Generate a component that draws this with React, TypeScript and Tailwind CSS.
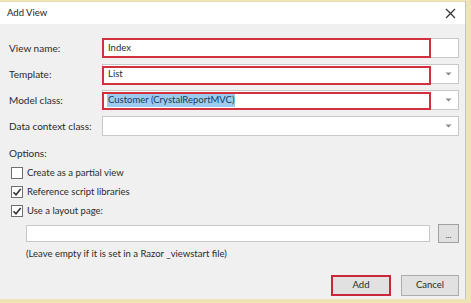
import React from "react";

const Chevron = () => (
  <svg width="7" height="4" viewBox="0 0 7 4" className="absolute right-[6px] top-1/2 -translate-y-1/2">
    <path d="M0.5 0.5 L3.5 3.5 L6.5 0.5 Z" fill="#8a8a8a" />
  </svg>
);

const Check = ({ checked }: { checked: boolean }) => (
  <div className="w-[12px] h-[12px] border border-[#6f6f6f] bg-white flex items-center justify-center shrink-0">
    {checked && (
      <svg width="10" height="10" viewBox="0 0 10 10">
        <path d="M1.5 5.2 L4 7.8 L8.7 2" fill="none" stroke="#333" strokeWidth="1.6" />
      </svg>
    )}
  </div>
);

export default function App() {
  const font = { fontFamily: 'Lato, "Noto Sans", sans-serif' };
  return (
    <div className="w-[471px] h-[303px] bg-[#efe3b8] overflow-hidden" style={font}>
      <div className="w-[466px] h-[298px] mt-[1px] bg-[#f0f0f0] border-r border-[#c4c4c4] flex flex-col">
        <div className="h-[23px] bg-white flex items-center justify-between pl-[7px] pr-[9px] border-t border-[#e8dca8]">
          <span className="text-[9.5px] text-[#222]">Add View</span>
          <svg width="11" height="11" viewBox="0 0 11 11">
            <path d="M1 1 L10 10 M10 1 L1 10" stroke="#333" strokeWidth="1.2" />
          </svg>
        </div>
        <div className="flex flex-col pl-[9px] pt-[14px] text-[10px] text-[#2a2a2a] w-[459px]">
          <div className="flex flex-col gap-[6px]">
            <div className="flex items-center h-[20px]">
              <span className="w-[93px]">View name:</span>
              <div className="relative w-[357px] h-[20px] bg-white border border-[#c8c8c8] flex items-center pl-[5px] text-[9.5px]">
                <span>Index</span>
                <div className="absolute left-[-1px] top-[-1px] w-[329px] h-[20px] border-2 border-[#d2303c]" />
              </div>
            </div>
            <div className="flex items-center h-[20px]">
              <span className="w-[93px]">Template:</span>
              <div className="relative w-[357px] h-[20px] bg-white border border-[#c8c8c8] flex items-center pl-[5px] text-[9.5px]">
                <span>List</span>
                <Chevron />
                <div className="absolute left-[-1px] top-[1px] w-[329px] h-[19px] border-2 border-[#d2303c]" />
              </div>
            </div>
            <div className="flex items-center h-[20px]">
              <span className="w-[93px]">Model class:</span>
              <div className="relative w-[357px] h-[20px] bg-white border border-[#c8c8c8] flex items-center pl-[4px] text-[9.5px]">
                <span className="bg-[#9ccbf0] px-[1px] text-[#1a3a5a]">Customer (CrystalReportMVC)</span>
                <Chevron />
                <div className="absolute left-[-1px] top-[1px] w-[329px] h-[18px] border-2 border-[#d2303c]" />
              </div>
            </div>
            <div className="flex items-center h-[20px]">
              <span className="w-[93px]">Data context class:</span>
              <div className="relative w-[357px] h-[20px] bg-white border border-[#c8c8c8]">
                <Chevron />
              </div>
            </div>
          </div>
          <div className="mt-[10px] h-[14px] leading-[14px]">Options:</div>
          <div className="mt-[6px] flex flex-col gap-[5px] text-[9.5px]">
            <div className="flex items-center h-[14px] gap-[4px] pl-[2px]">
              <Check checked={false} />
              <span>Create as a partial view</span>
            </div>
            <div className="flex items-center h-[14px] gap-[4px] pl-[2px]">
              <Check checked={true} />
              <span>Reference script libraries</span>
            </div>
            <div className="flex items-center h-[14px] gap-[4px] pl-[2px]">
              <Check checked={true} />
              <span>Use a layout page:</span>
            </div>
          </div>
          <div className="mt-[6px] flex items-center pl-[17px] h-[19px]">
            <div className="w-[404px] h-[17px] bg-white border border-[#c8c8c8]" />
            <div className="ml-[8px] w-[21px] h-[19px] bg-[#e1e1e1] border border-[#a0a0a0] flex items-end justify-center pb-[3px] text-[8px] leading-none">...</div>
          </div>
          <div className="mt-[4px] pl-[17px] h-[14px] leading-[14px] text-[9.5px]">(Leave empty if it is set in a Razor _viewstart file)</div>
          <div className="mt-[14px] flex items-center h-[21px] text-[9.5px]">
            <div className="ml-[322px] w-[60px] h-[21px] bg-[#e1e1e1] border-2 border-[#c8283a] flex items-center justify-center">Add</div>
            <div className="ml-[10px] w-[58px] h-[21px] bg-[#e1e1e1] border border-[#adadad] flex items-center justify-center">Cancel</div>
          </div>
        </div>
      </div>
    </div>
  );
}
